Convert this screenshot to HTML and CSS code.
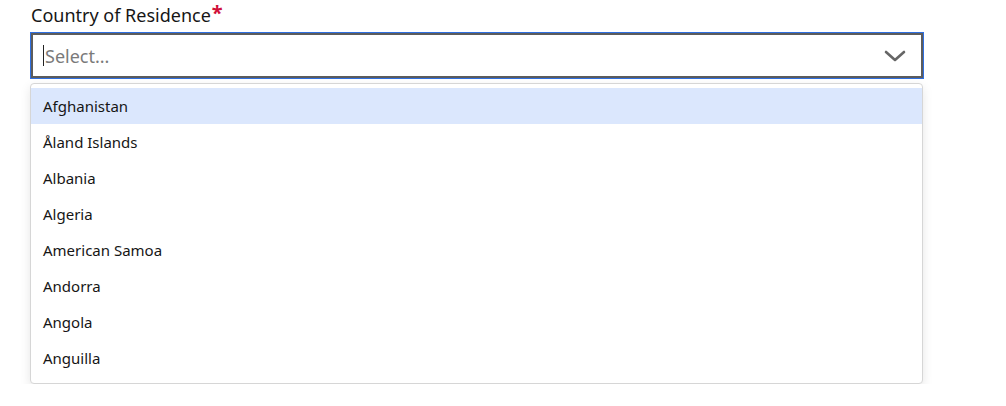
FILE: index.html
```html
<!DOCTYPE html>
<html>
<head>
<meta charset="utf-8">
<link rel="stylesheet" href="styles.css">
</head>
<body>
<div class="field">
  <label class="label">Country of Residence<span class="req">*</span></label>
  <div class="control">
    <div class="value"><span class="caret"></span><span class="placeholder">Select...</span></div>
    <svg class="chevron" width="22" height="14" viewBox="0 0 22 14"><path d="M2 3 L11 11 L20 3" fill="none" stroke="#666" stroke-width="2.6" stroke-linecap="round" stroke-linejoin="round"/></svg>
  </div>
  <div class="menu">
    <div class="option focused">Afghanistan</div>
    <div class="option">Åland Islands</div>
    <div class="option">Albania</div>
    <div class="option">Algeria</div>
    <div class="option">American Samoa</div>
    <div class="option">Andorra</div>
    <div class="option">Angola</div>
    <div class="option">Anguilla</div>
  </div>
</div>
</body>
</html>
```
FILE: styles.css
```css
html, body { margin: 0; padding: 0; background: #fff; }
body { font-family: "Noto Sans", "Open Sans", sans-serif; color: #161616; }
.field { width: 893px; padding: 3px 0 0 30px; position: relative; }
.label { display: block; font-size: 18px; line-height: 25px; height: 29px; padding-left: 1px; }
.req { display: inline-block; color: #d0103a; font-size: 20px; font-weight: bold; line-height: 20px; vertical-align: top; margin-left: 1px; }
.control { height: 41px; border: 2px solid #5c5c5c; box-shadow: 0 0 0 1px #2f6fe0; margin: 1px 0 0 1px; width: 888px; display: flex; align-items: center; justify-content: space-between; }
.value { display: flex; align-items: center; padding-left: 10px; font-size: 18px; }
.caret { width: 1px; height: 21px; background: #222; margin-right: 1px; }
.placeholder { color: #7a7a7a; }
.chevron { margin-right: 15px; }
.menu { margin-top: 5px; border: 1px solid #d6d6d6; border-radius: 4px; box-shadow: 0 4px 11px rgba(0,0,0,0.1); padding: 4px 0 7px; background: #fff; }
.option { height: 36px; line-height: 36px; padding-left: 12px; font-size: 15px; color: #161616; }
.option.focused { background: #dbe7fd; }
```
